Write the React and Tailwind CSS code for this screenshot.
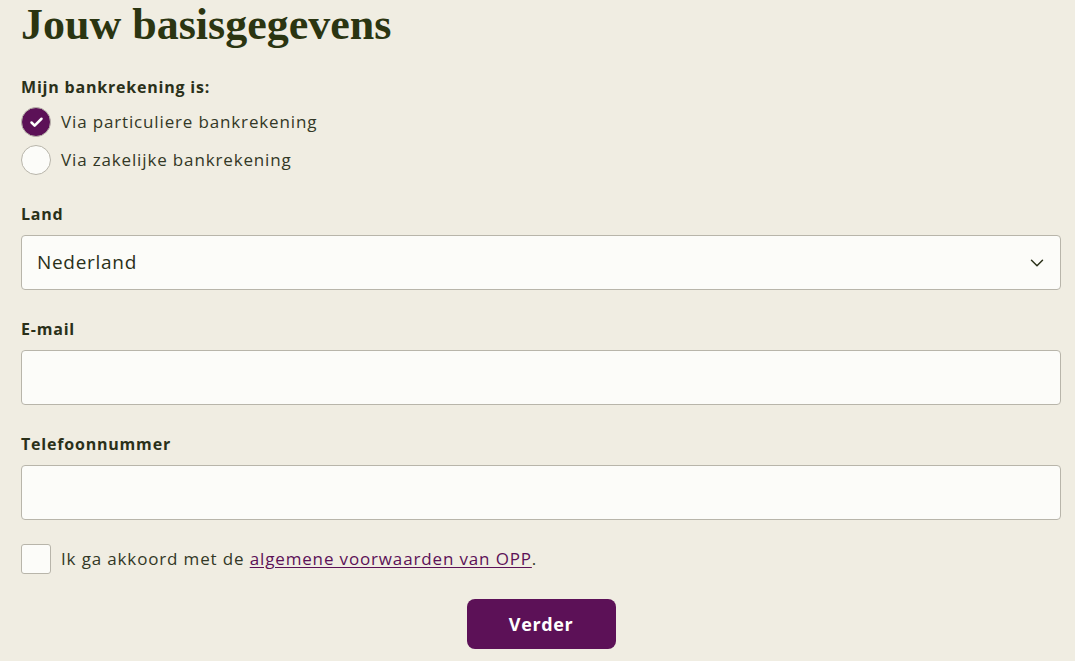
import { ChevronDown, Check } from 'lucide-react'

export default function App() {
  const sans = { fontFamily: '"Open Sans", "Noto Sans", sans-serif' }
  return (
    <main className="min-h-screen bg-[#f0ede2] text-[#2a3019]" style={sans}>
      <div className="px-[21px] pt-[1px]">
        <h1 className="text-[44px] leading-[48px] font-bold text-[#2b3511]" style={{ fontFamily: '"Liberation Serif", "DejaVu Serif", serif' }}>
          Jouw basisgegevens
        </h1>

        {/* Bank account type */}
        <div className="mt-[27px] text-[16px] font-bold leading-[22px] tracking-[0.8px]">Mijn bankrekening is:</div>
        <div className="mt-[9px] flex flex-col gap-[8px]">
          <label className="flex items-center gap-[10px]">
            <span className="w-[30px] h-[30px] rounded-full bg-[#5c1157] border border-[#b8b5aa] flex items-center justify-center">
              <Check className="w-[15px] h-[15px] text-white" strokeWidth={4} />
            </span>
            <span className="text-[17px] tracking-[0.85px] text-[#333826]">Via particuliere bankrekening</span>
          </label>
          <label className="flex items-center gap-[10px]">
            <span className="w-[30px] h-[30px] rounded-full bg-[#fcfcf9] border border-[#b8b5aa]" />
            <span className="text-[17px] tracking-[0.85px] text-[#333826]">Via zakelijke bankrekening</span>
          </label>
        </div>

        {/* Land */}
        <div className="mt-[28px] text-[16px] font-bold leading-[22px] tracking-[0.8px]">Land</div>
        <div className="mt-[10px] h-[55px] w-[1040px] rounded-[4px] border border-[#b8b5aa] bg-[#fcfcf9] flex items-center justify-between pl-[15px] pr-[12px]">
          <span className="text-[19px] tracking-[0.7px] text-[#2a3019]">Nederland</span>
          <ChevronDown className="w-[22px] h-[22px] text-[#2a3019]" strokeWidth={1.6} />
        </div>

        {/* E-mail */}
        <div className="mt-[28px] text-[16px] font-bold leading-[22px] tracking-[0.8px]">E-mail</div>
        <div className="mt-[10px] h-[55px] w-[1040px] rounded-[4px] border border-[#b8b5aa] bg-[#fcfcf9]" />

        {/* Telefoon */}
        <div className="mt-[28px] text-[16px] font-bold leading-[22px] tracking-[0.8px]">Telefoonnummer</div>
        <div className="mt-[10px] h-[55px] w-[1040px] rounded-[4px] border border-[#b8b5aa] bg-[#fcfcf9]" />

        {/* Terms */}
        <label className="mt-[24px] flex items-center gap-[10px]">
          <span className="w-[30px] h-[30px] rounded-[3px] border border-[#b8b5aa] bg-[#fcfcf9]" />
          <span className="text-[17px] tracking-[0.85px] text-[#333826]">
            Ik ga akkoord met de{' '}
            <a className="underline text-[#5c1157] underline-offset-2">algemene voorwaarden van OPP</a>.
          </span>
        </label>

        <div className="mt-[25px] w-[1040px] flex justify-center">
          <button className="w-[149px] h-[50px] rounded-[8px] bg-[#5c1157] text-white text-[18px] font-bold tracking-[0.6px]">Verder</button>
        </div>
      </div>
    </main>
  )
}
